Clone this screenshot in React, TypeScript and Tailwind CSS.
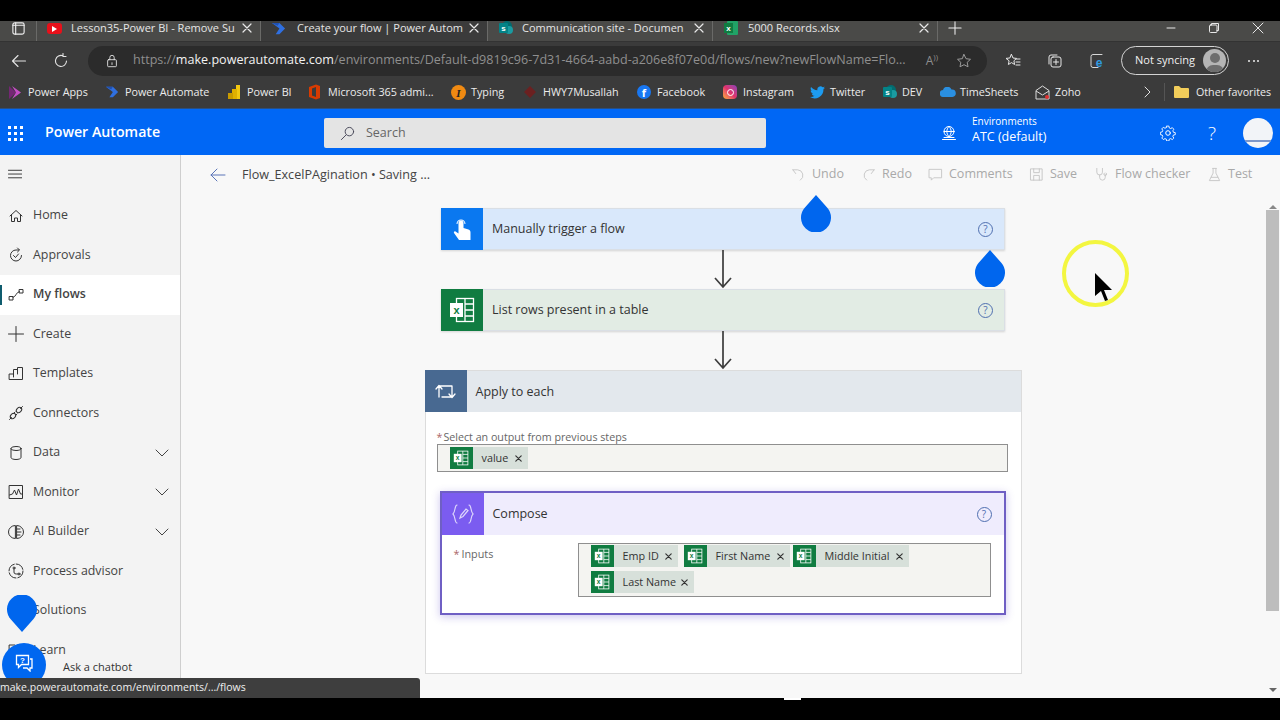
import React from "react";

const font = "font-['Open_Sans','Noto_Sans',sans-serif]";

function S({ size = 16, children, className = "", vb = 16, stroke = "currentColor", sw = 1 }: { size?: number; children: React.ReactNode; className?: string; vb?: number; stroke?: string; sw?: number }) {
  return (
    <svg width={size} height={size} viewBox={`0 0 ${vb} ${vb}`} fill="none" stroke={stroke} strokeWidth={sw} strokeLinecap="round" strokeLinejoin="round" className={"shrink-0 " + className}>
      {children}
    </svg>
  );
}

const X = ({ c = "text-[#e8e8e8]" }: { c?: string }) => (
  <S size={12} vb={12} className={c} sw={1.2}><path d="M2 2l8 8M10 2l-8 8" /></S>
);

const PAIcon = ({ size = 15 }: { size?: number }) => (
  <svg width={size} height={size} viewBox="0 0 16 16" className="shrink-0">
    <path d="M1 2h8l6 6-6 6H5l4-6z" fill="#2f6fe0" />
    <path d="M1 2l8 6-4 6 4-6z" fill="#8cb6f5" />
    <path d="M1 2h8l-2 3z" fill="#1f4fb0" />
  </svg>
);

const XlFav = () => (
  <svg width={16} height={16} viewBox="0 0 16 16" className="shrink-0">
    <rect x="4" y="1" width="11" height="14" rx="1" fill="#21a366" />
    <rect x="1" y="3" width="9" height="10" fill="#107c41" />
    <text x="5.5" y="11" fontSize="8" fontWeight="700" textAnchor="middle" fill="#fff" fontFamily="Liberation Sans">x</text>
  </svg>
);

const SpFav = () => (
  <svg width={16} height={16} viewBox="0 0 16 16" className="shrink-0">
    <circle cx="9" cy="6" r="5" fill="#036c70" />
    <circle cx="11" cy="10" r="4" fill="#1a9ba1" />
    <rect x="1" y="3" width="9" height="10" rx="1" fill="#038387" />
    <text x="5.5" y="11" fontSize="8" fontWeight="700" textAnchor="middle" fill="#fff" fontFamily="Liberation Sans">s</text>
  </svg>
);

function Tab({ w, icon, text, active = false, iconW = "w-[24px]" }: { w: string; icon: React.ReactNode; text: string; active?: boolean; iconW?: string }) {
  return (
    <div className={`${w} h-full flex items-center pl-[10px] pr-[7px] pb-[6px] border-r border-[#6a6a68] ${active ? "bg-[#3b3b3b]" : ""}`}>
      <span className={`${iconW} flex shrink-0`}>{icon}</span>
      <span className="flex-1 text-[11px] text-[#e6e6e6] whitespace-nowrap">{text}</span>
      <X />
    </div>
  );
}

function Bm({ w, icon, text }: { w: string; icon: React.ReactNode; text: string }) {
  return (
    <div className={`${w} flex items-center shrink-0`}>
      <span className="w-[20px] flex">{icon}</span>
      <span className="text-[10.800px] text-[#ececec] whitespace-nowrap">{text}</span>
    </div>
  );
}

const navIcons: Record<string, React.ReactNode> = {
  Home: <path d="M2 8l6-5.5L14 8M3.500 7v6.500h3V10h3v3.500h3V7" />,
  Approvals: <><path d="M13.500 8.500A5.500 5.500 0 1 1 8 3h3" /><path d="M9.500 1l2 2-2 2M5.500 8.500l2 2 3-3.500" /></>,
  "My flows": <><rect x="1.500" y="9.500" width="3.500" height="3.500" /><rect x="11.500" y="2.500" width="3.500" height="3.500" /><path d="M5 10.500C8 10 8 5 11.500 4.500" /></>,
  Create: <path d="M8 0.500v15M0.500 8h15" />,
  Templates: <path d="M1.500 8h4V3.500h4V1.500h5v12h-13zM5.500 8v3M9.500 3.500v4.500" />,
  Connectors: <><path d="M1.500 14.500l2-2M14.500 1.500l-2 2M7 7l-1.500 1.500M9 9l-1.500 1.500" /><ellipse cx="5" cy="11" rx="3" ry="2.300" transform="rotate(-45 5 11)" /><ellipse cx="11" cy="5" rx="3" ry="2.300" transform="rotate(-45 11 5)" /></>,
  Data: <><ellipse cx="8" cy="3.500" rx="5" ry="2" /><path d="M3 3.500v9c0 1 2 2 5 2s5-1 5-2v-9" /></>,
  Monitor: <><rect x="1.500" y="1.500" width="13" height="13" /><path d="M1.500 11l3-1 2-4 2 5 2-6 2 5h2" /></>,
  "AI Builder": <path d="M7 1.500a6 6 0 0 0 0 13zM9 1.500a6 6 0 0 1 0 13zM9 5h3M9 8h4M9 11h3" />,
  "Process advisor": <><circle cx="8" cy="8" r="7" strokeDasharray="9 2" /><circle cx="6" cy="5" r="1" /><circle cx="11" cy="11" r="1" /><path d="M6 6v3c0 2 1 2 4 2" /></>,
  Solutions: <rect x="2" y="2" width="12" height="12" />,
  Learn: <path d="M1.500 3h5.500l1 1 1-1h5.500v10H1.500zM8 4v9" />,
};

function NavItem({ label, active = false, chevron = false }: { label: string; active?: boolean; chevron?: boolean }) {
  return (
    <div className={`h-[39.500px] shrink-0 flex items-center pl-[8px] pr-[11px] relative ${active ? "bg-white font-semibold" : ""}`}>
      {active && <span className="absolute left-0 top-[10px] h-[20px] w-[2px] bg-[#0f5c6e]" />}
      <S size={16} className="text-[#333] mr-[9px]" sw={1}>{navIcons[label]}</S>
      <span className="flex-1 text-[12.400px] text-[#444] whitespace-nowrap">{label}</span>
      {chevron && <S size={14} vb={14} className="text-[#444]"><path d="M1 4l6 6 6-6" /></S>}
    </div>
  );
}

function Tool({ icon, text, className }: { icon: React.ReactNode; text: string; className: string }) {
  return (
    <div className={`flex items-center text-[#a9a9a9] pb-[1px] ${className}`}>
      <S size={15} className="mr-[6px] text-[#c6c6c6]">{icon}</S>
      <span className="text-[12.500px] whitespace-nowrap">{text}</span>
    </div>
  );
}

const Help = () => (
  <span className="block w-[15px] h-[15px] rounded-full border border-[#4f6fb0] text-[#4f6fb0] text-[10px] leading-[13px] text-center shrink-0">?</span>
);

const XlLogo = ({ s = 30 }: { s?: number }) => (
  <svg width={s} height={s} viewBox="0 0 30 30" className="shrink-0" fill="none">
    <rect x="9.500" y="3.500" width="17" height="23" stroke="#fff" strokeWidth="1.300" />
    <path d="M18 3.500v23M18 9h8.500M18 15h8.500M18 21h8.500" stroke="#fff" strokeWidth="1.300" />
    <rect x="3" y="8" width="13" height="14" fill="#fff" />
    <text x="9.500" y="19" fontSize="11" fontWeight="700" textAnchor="middle" fill="#107c41" fontFamily="Liberation Sans">x</text>
  </svg>
);

function Chip({ label, bodyW }: { label: string; bodyW: string }) {
  return (
    <div className="flex h-[22px] items-stretch shrink-0">
      <span className="w-[23px] bg-[#107c41] flex items-center justify-center"><XlLogo s={18} /></span>
      <span className={`${bodyW} bg-[#d7e0da] flex items-center pl-[9px] pr-[5px] text-[10.800px] text-[#333] whitespace-nowrap`}>
        <span className="flex-1">{label}</span>
        <S size={9} vb={10} className="text-[#333]" sw={1.300}><path d="M2 2l6 6M8 2l-6 6" /></S>
      </span>
    </div>
  );
}

const Arrow = () => (
  <svg width="20" height="39" viewBox="0 0 20 39" fill="none" stroke="#3d3d3d" strokeWidth="1.700" className="shrink-0">
    <path d="M10 0v37M2 28l8 9 8-9" />
  </svg>
);

const Drop = ({ className, flip = false }: { className: string; flip?: boolean }) => (
  <svg width="30" height="37" viewBox="0 0 30 37" className={`absolute ${className}`}>
    <path d={flip ? "M15 37L3.500 24A15 15 0 1 1 26.500 24Z" : "M15 0L26.500 13A15 15 0 1 1 3.500 13Z"} fill="#0066ee" />
  </svg>
);

export default function App() {
  return (
    <div className={`w-[1280px] h-[720px] bg-black overflow-hidden relative flex flex-col ${font}`}>
      <div className="h-[21px] shrink-0 bg-black" />

      {/* tab strip */}
      <div className="h-[21px] shrink-0 bg-[#4a4a48] flex items-center border-b border-[#333]">
        <div className="w-[37px] h-full flex items-center justify-center border-r border-[#6a6a68] pb-[6px]">
          <S size={15} className="text-[#eee]" sw={1.200}><rect x="2" y="2" width="12" height="12" rx="2" /><path d="M5 2v12M2 4.500h12" /></S>
        </div>
        <Tab w="w-[224px]" icon={<span className="w-[15px] h-[11px] mt-[1px] rounded-[3px] bg-[#e8101a] flex items-center justify-center"><span className="border-l-[5px] border-y-[3px] border-l-white border-y-transparent" /></span>} text="Lesson35-Power BI - Remove Su" />
        <Tab active iconW="w-[26px]" w="w-[227px]" icon={<PAIcon />} text="Create your flow | Power Autom" />
        <Tab w="w-[225px]" icon={<SpFav />} text="Communication site - Documen" />
        <Tab iconW="w-[25px]" w="w-[225px]" icon={<XlFav />} text="5000 Records.xlsx" />
        <S size={14} className="ml-[10px] mb-[6px] text-[#eee]" sw={1.200}><path d="M8 1v14M1 8h14" /></S>
        <div className="flex-1" />
        <div className="flex items-center text-[#e8e8e8] pr-[15px] gap-[31px] mb-[6px]">
          <S size={12} vb={12}><path d="M2 6h8" /></S>
          <S size={12} vb={12}><rect x="1.500" y="3" width="7.500" height="7.500" rx="1" /><path d="M3.500 3V1.500h7v7H9" /></S>
          <S size={14} vb={14}><path d="M2 2l10 10M12 2L2 12" /></S>
        </div>
      </div>

      {/* address bar */}
      <div className="h-[37px] shrink-0 bg-[#3b3b3b] flex items-center">
        <div className="w-[88px] shrink-0 flex items-center pl-[11px] gap-[26px] text-[#e4e4e4]">
          <S size={16} sw={1.100}><path d="M1.500 8h13M7 2.500L1.500 8 7 13.500" /></S>
          <S size={16} sw={1.100}><path d="M13.500 8A5.500 5.500 0 1 1 10 2.800M10 .5v3h3" /></S>
        </div>
        <div className="w-[899px] h-[30px] shrink-0 bg-[#2b2b2b] rounded-full flex items-center pl-[17px] pr-[15px]">
          <S size={14} className="text-[#e8e8e8] mr-[14px]"><rect x="3" y="6.500" width="10" height="8" rx="1" /><path d="M5.500 6.500V4a2.500 2.500 0 0 1 5 0v2.500M8 10v2" /></S>
          <span className="flex-1 text-[12.570px] text-[#8f8f8f] whitespace-nowrap">https://<span className="text-[#f2f2f2]">make.powerautomate.com</span>/environments/Default-d9819c96-7d31-4664-aabd-a206e8f07e0d/flows/new?newFlowName=Flo...</span>
          <span className="text-[12px] text-[#8f8f8f]">A<span className="text-[8px] align-super">))</span></span>
          <S size={16} className="ml-[18px] text-[#9a9a9a]"><path d="M8 1.500l2 4.200 4.500.6-3.300 3 .8 4.500L8 11.700 4 13.800l.8-4.500-3.300-3 4.500-.6z" /></S>
        </div>
        <div className="flex items-center text-[#e8e8e8] ml-[18px] gap-[26px]">
          <S size={16}><path d="M6.500 1.500l1.500 3.500 3.500.4-2.600 2.400.7 3.700-3.100-1.900-3.100 1.900.7-3.700L1 5.400 4.500 5zM11 6h4M11 9h4M11 12h4" /></S>
          <S size={16}><rect x="4" y="4" width="10" height="10" rx="2" /><path d="M2 11V4a2 2 0 0 1 2-2h6M9 6.500v5M6.500 9h5" /></S>
          <S size={16} stroke="#d7d7d7"><path d="M13 1.500H4a2 2 0 0 0-2 2v9a2 2 0 0 0 2 2h5" /><text x="10" y="14" fontSize="12" fontWeight="700" textAnchor="middle" fill="#2f9be0" stroke="none" fontFamily="Liberation Sans">e</text></S>
        </div>
        <div className="ml-[16px] w-[108px] h-[29px] rounded-full border border-[#d4d4d4] flex items-center pl-[13px] pr-[2px] justify-between">
          <span className="text-[11px] text-[#f0f0f0] whitespace-nowrap">Not syncing</span>
          <span className="w-[23px] h-[23px] rounded-full bg-[#b5b5b5] flex items-end justify-center overflow-hidden relative">
            <span className="absolute top-[4px] w-[10px] h-[10px] rounded-full bg-[#6e6e6e]" />
            <span className="w-[18px] h-[7px] rounded-t-full bg-[#6e6e6e]" />
          </span>
        </div>
        <div className="ml-[19px] flex gap-[2.500px]">
          <span className="w-[2px] h-[2px] bg-[#eee] rounded-full" />
          <span className="w-[2px] h-[2px] bg-[#eee] rounded-full" />
          <span className="w-[2px] h-[2px] bg-[#eee] rounded-full" />
        </div>
      </div>

      {/* bookmarks */}
      <div className="h-[30px] shrink-0 bg-[#3b3b3b] flex items-center pl-[8px] pb-[3px] border-b border-[#2a4f80]">
        <Bm w="w-[97px]" text="Power Apps" icon={<svg width="14" height="15" viewBox="0 0 14 15"><path d="M1 1l7 6.500L1 14z" fill="#742774" /><path d="M4 1l9 6.500L4 14l4-6.500z" fill="#c54ec5" /></svg>} />
        <Bm w="w-[122px]" text="Power Automate" icon={<PAIcon size={14} />} />
        <Bm w="w-[81px]" text="Power BI" icon={<svg width="14" height="16" viewBox="0 0 14 16"><rect x="9" y="1" width="4" height="14" fill="#f2c811" /><rect x="5" y="5" width="5" height="10" fill="#e0b000" /><rect x="1" y="9" width="5" height="6" fill="#c89a00" /></svg>} />
        <Bm w="w-[143px]" text="Microsoft 365 admi..." icon={<svg width="13" height="16" viewBox="0 0 13 16"><path d="M1 3l7-2.500 4 1.500v12l-4 1.500-7-2.500z" fill="#d83b01" /><path d="M4 4.500v7l4 1.500V3z" fill="#3b3b3b" /></svg>} />
        <Bm w="w-[72px]" text="Typing" icon={<svg width="15" height="15" viewBox="0 0 15 15"><circle cx="7.500" cy="7.500" r="7.500" fill="#f08a12" /><text x="7.500" y="11.500" fontSize="11" fontStyle="italic" fontWeight="700" textAnchor="middle" fill="#222" fontFamily="Liberation Serif">I</text></svg>} />
        <Bm w="w-[114px]" text="HWY7Musallah" icon={<svg width="14" height="14" viewBox="0 0 14 14"><path d="M7 1L13 7 7 13 1 7z" fill="#6b2020" /></svg>} />
        <Bm w="w-[86px]" text="Facebook" icon={<span className="w-[14px] h-[14px] rounded-full bg-[#1877f2] text-white text-[11px] font-bold leading-[15px] text-center">f</span>} />
        <Bm w="w-[87px]" text="Instagram" icon={<span className="w-[14px] h-[14px] rounded-[4px] bg-gradient-to-tr from-[#f9a825] via-[#e1306c] to-[#8a3ab9] flex items-center justify-center"><span className="w-[7px] h-[7px] rounded-full border border-white" /></span>} />
        <Bm w="w-[72px]" text="Twitter" icon={<svg width="15" height="13" viewBox="0 0 24 20"><path d="M24 2.400c-.9.400-1.800.700-2.800.800 1-.6 1.800-1.600 2.200-2.700-1 .6-2 1-3.100 1.200A4.900 4.900 0 0 0 11.900 6.200C7.800 6 4.200 4 1.700 1 .4 3.200 1 6 3.200 7.500c-.8 0-1.600-.2-2.200-.6 0 2.300 1.600 4.300 3.900 4.800-.7.200-1.500.2-2.200.1.600 2 2.400 3.400 4.600 3.400A9.900 9.900 0 0 1 0 17.200 14 14 0 0 0 21.500 4.900c1-.7 1.800-1.500 2.500-2.500z" fill="#1d9bf0" /></svg>} />
        <Bm w="w-[58px]" text="DEV" icon={<SpFav />} />
        <Bm w="w-[95px]" text="TimeSheets" icon={<svg width="16" height="10" viewBox="0 0 16 10"><path d="M3.500 10a3.500 3.500 0 0 1-.5-7 4.500 4.500 0 0 1 8.500-.5A3.700 3.700 0 0 1 12.500 10z" fill="#2a8fe0" /></svg>} />
        <Bm w="w-[106px]" text="Zoho" icon={<svg width="15" height="15" viewBox="0 0 15 15" fill="none" stroke="#dcdcdc"><path d="M7.500 1L14 5.500V14H1V5.500z" /><path d="M1 6l6.500 4L14 6" /><circle cx="12" cy="12" r="2" fill="#e03030" stroke="none" /></svg>} />
        <S size={12} vb={12} className="text-[#e0e0e0]"><path d="M4 1l5 5-5 5" /></S>
        <span className="w-px h-[18px] bg-[#555] ml-[11px]" />
        <svg width="15" height="14" viewBox="0 0 15 14" className="ml-[9px] shrink-0"><path d="M0 2a1 1 0 0 1 1-1h4l2 2h7a1 1 0 0 1 1 1v8a1 1 0 0 1-1 1H1a1 1 0 0 1-1-1z" fill="#f2cd5a" /></svg>
        <span className="ml-[7px] text-[10.700px] text-[#ececec] whitespace-nowrap">Other favorites</span>
      </div>

      {/* blue header */}
      <div className="h-[46px] shrink-0 bg-[#0067f5] flex items-center text-white pt-[2px]">
        <div className="w-[45px] shrink-0 pl-[8px]">
          <div className="grid grid-cols-3 gap-[3px] w-[15px]">
            {[0, 1, 2, 3, 4, 5, 6, 7, 8].map((i) => <span key={i} className="w-[3px] h-[3px] bg-white" />)}
          </div>
        </div>
        <span className="w-[279px] shrink-0 text-[14.200px] font-semibold mb-[2px]">Power Automate</span>
        <div className="w-[442px] h-[30px] shrink-0 bg-[#e4e4e4] rounded-[2px] flex items-center pl-[16px]">
          <S size={15} className="text-[#445]"><circle cx="10" cy="6" r="4.500" /><path d="M6.500 9.500L1.500 14.500" /></S>
          <span className="ml-[11px] text-[12.500px] text-[#666]">Search</span>
        </div>
        <div className="ml-[175px] w-[16px] shrink-0">
          <S size={16} className="text-white"><path d="M1.500 14.500h13M3 12.500h10" /><circle cx="8" cy="6.500" r="5" /><path d="M3 6.500h10M8 1.500c-3 3-3 7 0 10M8 1.500c3 3 3 7 0 10" /></S>
        </div>
        <div className="ml-[15px] w-[188px] shrink-0 flex flex-col leading-none mb-[6px]">
          <span className="text-[10px] mb-[5px]">Environments</span>
          <span className="text-[12.500px]">ATC (default)</span>
        </div>
        <S size={16} className="text-white"><path d="M6.800 1h2.400l.4 2 1.500.7 1.800-1 1.600 1.700-1 1.700.6 1.600 2 .4v2.200l-2 .4-.6 1.500 1 1.800-1.600 1.600-1.800-1-1.500.6-.4 2H6.800l-.4-2-1.500-.6-1.800 1-1.600-1.600 1-1.800-.6-1.500-2-.4V7.700l2-.4.6-1.600-1-1.700 1.600-1.700 1.800 1 1.500-.7z" transform="scale(.92) translate(.5 .2)" /><circle cx="8" cy="8" r="2.300" /></S>
        <span className="ml-[32px] w-[11px] text-[19px] font-light leading-none">?</span>
        <div className="ml-[24px] w-[30px] h-[30px] rounded-full bg-[#f2f4f8] overflow-hidden flex flex-col justify-end">
          <div className="h-[2px] bg-[#7d97c9] mb-[6px]" />
        </div>
      </div>

      {/* body */}
      <div className="flex-1 min-h-0 flex bg-[#f8f8f8]">
        {/* sidebar */}
        <aside className="w-[181px] shrink-0 bg-[#f3f3f3] border-r border-[#cfcfcf] flex flex-col overflow-hidden">
          <div className="h-[41px] shrink-0 flex items-center pl-[8px] pb-[2px]">
            <S size={15} className="text-[#333]"><path d="M0.500 3.500h14M0.500 7.500h14M0.500 11.500h14" /></S>
          </div>
          {[
            ["Home"], ["Approvals"], ["My flows", "active"], ["Create"], ["Templates"], ["Connectors"],
            ["Data", "chev"], ["Monitor", "chev"], ["AI Builder", "chev"], ["Process advisor"], ["Solutions"], ["Learn"],
          ].map(([l, f]) => <NavItem key={l} label={l} active={f === "active"} chevron={f === "chev"} />)}
        </aside>

        {/* main */}
        <main className="flex-1 min-w-0 flex flex-col">
          {/* toolbar */}
          <div className="h-[40px] shrink-0 flex items-center bg-[#f8f8f8]">
            <S size={16} className="ml-[29px] text-[#5a74b8]"><path d="M1 8h14M7 2L1 8l6 6" /></S>
            <span className="ml-[16px] w-[549px] shrink-0 text-[12.600px] text-[#444] whitespace-nowrap">Flow_ExcelPAgination • Saving ...</span>
            <Tool className="w-[70px]" text="Undo" icon={<path d="M2 3l3 4M2 3h5a6 6 0 0 1 3 11" />} />
            <Tool className="w-[67px]" text="Redo" icon={<path d="M14 3l-3 4M14 3H9a6 6 0 0 0-3 11" />} />
            <Tool className="w-[101px]" text="Comments" icon={<path d="M1.500 2.500h13v9H6L3.500 14v-2.500h-2z" />} />
            <Tool className="w-[65px]" text="Save" icon={<path d="M2 2h12v12H2zM5 2v4h6V2M5 14V9h6v5" />} />
            <Tool className="w-[113px]" text="Flow checker" icon={<path d="M3 1.500v4a3 3 0 0 0 6 0v-4M6 8.500V11a3 3 0 0 0 6 0V8M13 6.500a1.500 1.500 0 1 1-2 0" />} />
            <Tool className="w-[48px]" text="Test" icon={<path d="M6 1.500h4M6.500 1.500v5L2.500 14.500h11l-4-8v-5M4.500 11h7" />} />
          </div>

          {/* canvas + scrollbar */}
          <div className="flex-1 min-h-0 flex">
            <div className="flex-1 min-w-0 flex flex-col items-center pt-[13px] overflow-hidden">
              <div className="w-[564px] h-[42px] shrink-0 bg-[#d9e8fb] border-y border-r border-[#dadfe5] flex items-center shadow-[0_1px_2px_rgba(0,0,0,0.15)]">
                <span className="w-[42px] h-[42px] shrink-0 bg-[#0a78f0] flex items-center justify-center">
                  <svg width="24" height="26" viewBox="0 0 24 26" fill="#fff"><path d="M8.500 7a2.500 2.500 0 0 1 5 0v5l5 1.500c1.500.5 2 1.500 2 3V24H9l-5-7c-.5-1 .5-2 1.500-1.500l3 2z" /><path d="M6.500 8a4.500 4.500 0 1 1 9 0h-1a3.500 3.500 0 1 0-7 0z" /></svg>
                </span>
                <span className="ml-[9px] flex-1 pt-[1px] text-[12.500px] text-[#333]">Manually trigger a flow</span>
                <span className="mr-[11px]"><Help /></span>
              </div>
              <Arrow />
              <div className="w-[564px] h-[42px] shrink-0 bg-[#e2ece4] border-y border-r border-[#dadfe5] flex items-center shadow-[0_1px_2px_rgba(0,0,0,0.15)]">
                <span className="w-[42px] h-[42px] shrink-0 bg-[#107c41] flex items-center justify-center"><XlLogo /></span>
                <span className="ml-[9px] flex-1 pt-[1px] text-[12.500px] text-[#333]">List rows present in a table</span>
                <span className="mr-[11px]"><Help /></span>
              </div>
              <Arrow />
              <div className="w-[597px] h-[304px] shrink-0 bg-white border border-[#dcdcdc] flex flex-col">
                <div className="h-[41px] shrink-0 bg-[#e3e8ed] flex items-center">
                  <span className="w-[42px] h-[42px] -ml-px -mt-px bg-[#486991] flex items-center justify-center">
                    <S size={22} vb={22} className="text-white" sw={1.300}><path d="M5 17V6h13v11H8M2 9l3-3.500L8 9M15 14l3 3.500 3-3.500" transform="translate(-1 0)" /></S>
                  </span>
                  <span className="ml-[9px] pt-[1px] text-[12.500px] text-[#333]">Apply to each</span>
                </div>
                <div className="pl-[11px] pt-[18px]">
                  <div className="text-[10.700px] leading-[14px] text-[#666]"><span className="text-[#a66]">*</span><span className="ml-[1px]">Select an output from previous steps</span></div>
                  <div className="h-[28px] w-[571px] bg-[#f4f4f1] border border-[#8f8f8f] flex items-center pl-[12px]">
                    <Chip label="value" bodyW="w-[55px]" />
                  </div>
                </div>
                <div className="ml-[14px] mr-[15px] mt-[19px] h-[124px] bg-white border-2 border-[#6f5fc4] shadow-[0_2px_8px_rgba(90,70,200,0.3)] flex flex-col">
                  <div className="h-[42px] shrink-0 bg-[#efecfd] flex items-center">
                    <span className="w-[42px] h-[42px] shrink-0 bg-[#7b5cf0] flex items-center justify-center">
                      <svg width="24" height="22" viewBox="0 0 24 22" fill="none" stroke="#ddd6fb" strokeWidth="1.200" strokeLinecap="round"><path d="M6 2C3.500 2 4.500 9 2 11c2.500 2 1.500 9 4 9M18 2c2.500 0 1.500 7 4 9-2.500 2-1.500 9-4 9" /><path d="M9 15l1-3 5-6 2 1.500-5 6z" /></svg>
                    </span>
                    <span className="ml-[9px] flex-1 text-[12.500px] text-[#333]">Compose</span>
                    <span className="mr-[12px]"><Help /></span>
                  </div>
                  <div className="flex pt-[8px]">
                    <div className="w-[136px] shrink-0 pl-[12px] pt-[2px] text-[10.800px] text-[#666] leading-[18px]"><span className="text-[#a66]">*</span><span className="ml-[2px]">Inputs</span></div>
                    <div className="w-[413px] h-[54px] bg-[#f4f4f1] border border-[#8f8f8f] pl-[12px] pt-[1px]">
                      <div className="flex gap-x-[6px] flex-wrap w-[380px] content-start gap-y-[4px]">
                        <Chip label="Emp ID" bodyW="w-[64px]" />
                        <Chip label="First Name" bodyW="w-[83px]" />
                        <span className="-ml-[3px]"><Chip label="Middle Initial" bodyW="w-[93px]" /></span>
                        <Chip label="Last Name" bodyW="w-[80px]" />
                      </div>
                    </div>
                  </div>
                </div>
              </div>
            </div>
            <div className="w-[15px] shrink-0 flex flex-col items-center bg-[#f8f8f8] pt-[10px]">
              <span className="border-x-[4px] border-b-[4px] border-x-transparent border-b-[#888]" />
              <span className="w-[13px] h-[401px] mt-[1px] bg-[#bdbdbd]" />
              <div className="flex-1" />
              <span className="mb-[6px] border-x-[4px] border-t-[4px] border-x-transparent border-t-[#666]" />
            </div>
          </div>
        </main>
      </div>

      <div className="h-[22px] shrink-0 bg-black" />

      {/* overlays */}
      <Drop className="left-[801px] top-[195px]" />
      <Drop className="left-[975px] top-[250px]" />
      <Drop className="left-[7px] top-[595px]" flip />

      <div className="absolute left-[1062px] top-[240px] w-[67px] h-[67px] rounded-full border-[4px] border-[#f3f640]" />
      <svg width="20" height="30" viewBox="0 0 20 30" className="absolute left-[1094px] top-[273px]">
        <path d="M1 0v23l6-5 4 10 3-1-4-10h8z" fill="#000" />
      </svg>

      <div className="absolute left-[2px] top-[643px] w-[44px] h-[44px] rounded-full bg-[#0067f0] flex items-start justify-center pt-[11px]">
        <svg width="18" height="18" viewBox="0 0 18 18" fill="none" stroke="#fff" strokeWidth="1.300"><path d="M1.500 1.500h12v9h-7l-3 3v-3h-2z" /><path d="M15 5h2v9h-2v3l-3-3H8" /><text x="7.500" y="9" fontSize="8" fontWeight="700" textAnchor="middle" fill="#fff" stroke="none" fontFamily="Liberation Sans">?</text></svg>
      </div>
      <span className="absolute left-[63px] top-[659px] text-[11px] text-[#333]">Ask a chatbot</span>

      <div className="absolute left-0 top-[678px] w-[420px] h-[20px] bg-[#3e3e3e] rounded-tr-[3px] flex items-center text-[10.500px] text-[#f0f0f0] whitespace-nowrap">make.powerautomate.com/environments/.../flows</div>
      <div className="absolute left-[784px] top-[698px] w-[17px] h-[2px] bg-white" />
    </div>
  );
}
